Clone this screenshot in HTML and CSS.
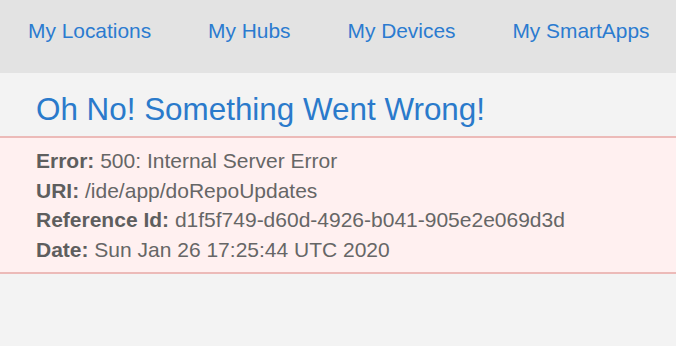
FILE: index.html
```html
<!DOCTYPE html>
<html>
<head>
<meta charset="utf-8">
<link rel="stylesheet" href="styles.css">
</head>
<body>
<nav class="nav">
  <a class="nav-link" href="#">My Locations</a>
  <a class="nav-link" href="#">My Hubs</a>
  <a class="nav-link" href="#">My Devices</a>
  <a class="nav-link" href="#">My SmartApps</a>
</nav>
<h1 class="title">Oh No! Something Went Wrong!</h1>
<div class="error-box">
  <div class="row"><span class="label">Error:</span> 500: Internal Server Error</div>
  <div class="row"><span class="label">URI:</span> /ide/app/doRepoUpdates</div>
  <div class="row"><span class="label">Reference Id:</span> d1f5f749-d60d-4926-b041-905e2e069d3d</div>
  <div class="row"><span class="label">Date:</span> Sun Jan 26 17:25:44 UTC 2020</div>
</div>
</body>
</html>
```

FILE: styles.css
```css
html, body {
  margin: 0;
  padding: 0;
}
body {
  background: #f3f3f3;
  font-family: "Liberation Sans", Arial, sans-serif;
  color: #666666;
  height: 346px;
  overflow: hidden;
}
.nav {
  background: #e3e3e3;
  height: 73px;
  box-sizing: border-box;
  padding: 19px 0 0 28px;
  display: flex;
  gap: 57px;
}
.nav-link {
  font-size: 20.9px;
  line-height: 24px;
  color: #2b7bd0;
  text-decoration: none;
}
.title {
  margin: 20px 0 9px 36px;
  font-size: 31.4px;
  line-height: 34px;
  font-weight: normal;
  color: #2a7acb;
}
.error-box {
  background: #fff0f0;
  border-top: 2px solid #ecbab8;
  border-bottom: 2px solid #ecbab8;
  padding: 8px 36px 8px;
  font-size: 21px;
  line-height: 29.6px;
  color: #666666;
}
.label {
  font-weight: bold;
  color: #5e5e5e;
}
```
